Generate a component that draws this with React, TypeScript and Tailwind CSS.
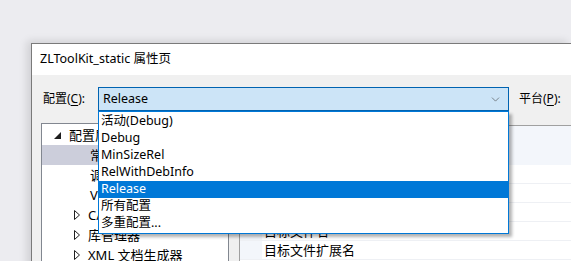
import { ChevronDown } from "lucide-react";

const font = "font-['Noto_Sans','Noto_Sans_CJK_SC',sans-serif]";

const configs = ["活动(Debug)", "Debug", "MinSizeRel", "RelWithDebInfo", "Release", "所有配置", "多重配置..."];

// tree rows: open = expanded node, leaf = child page, closed = collapsed node
const tree = [
    { label: "配置属性", kind: "open" },
    { label: "常规", kind: "leaf", selected: true },
    { label: "调试", kind: "leaf" },
    { label: "VC++ 目录", kind: "leaf" },
    { label: "C/C++", kind: "closed" },
    { label: "库管理器", kind: "closed" },
    { label: "XML 文档生成器", kind: "closed" },
];

const props = ["", "", "", "目标文件名", "目标文件扩展名"];

function Underlined({ text }: { text: string }) {
    // renders "配置(C):" with the access key underlined
    const m = text.match(/^(.*\()(.)(\).*)$/);
    if (!m) return <span>{text}</span>;
    return (
        <span>
            {m[1]}
            <span className="underline underline-offset-2">{m[2]}</span>
            {m[3]}
        </span>
    );
}

export default function App() {
    return (
        <div className={`relative h-[261px] w-[571px] overflow-hidden bg-[#ececf0] text-[12px] leading-none text-black ${font}`}>
            <div className="pl-[31px] pt-[43px]">
                <div className="h-[260px] border-l border-t border-[#7a7a7a] bg-[#f0f0f0] shadow-[-4px_-2px_8px_rgba(0,0,0,0.12)]">
                    {/* title bar */}
                    <div className="flex h-[31px] items-center bg-white pl-[8px] text-[12.5px]">ZLToolKit_static 属性页</div>

                    {/* configuration row */}
                    <div className="flex h-[48px] items-center">
                        <div className="w-[66px] pl-[11px]">
                            <Underlined text="配置(C):" />
                        </div>
                        <div className="flex h-[24px] w-[411px] items-center justify-between border border-[#0063b1] bg-[#cce4f7] pl-[4px] pr-[6px] text-[12.5px]">
                            <span>Release</span>
                            <ChevronDown size={13} strokeWidth={1.1} className="text-[#404040]" />
                        </div>
                        <div className="pl-[10px]">
                            <Underlined text="平台(P):" />
                        </div>
                    </div>

                    {/* tree + property grid */}
                    <div className="flex pl-[9px]">
                        <div className="h-[200px] w-[188px] border-l border-t border-r border-[#828790] bg-white pt-[1px]">
                            {tree.map((t) => (
                                <div
                                    key={t.label}
                                    className={`flex h-[20px] items-center ${t.selected ? "bg-[#cccedb]" : ""} ${t.kind === "open" ? "pl-[12px]" : t.kind === "closed" ? "pl-[32px]" : "pl-[48px]"}`}
                                >
                                    {t.kind === "open" && (
                                        <svg width="7" height="7" viewBox="0 0 7 7" className="mr-[8px]">
                                            <path d="M7 0 L7 7 L0 7 Z" fill="#1e1e1e" />
                                        </svg>
                                    )}
                                    {t.kind === "closed" && (
                                        <svg width="6" height="10" viewBox="0 0 6 10" className="mr-[8px]">
                                            <path d="M0.5 0.5 L5.5 5 L0.5 9.5 Z" fill="none" stroke="#1e1e1e" strokeWidth="1" />
                                        </svg>
                                    )}
                                    <span className="text-[13px]">{t.label}</span>
                                </div>
                            ))}
                        </div>
                        <div className="ml-[10px] mt-[2px] flex-1 border-l border-t border-[#a0a0a0] bg-white">
                            <div className="h-[39px] bg-[#f3f6fb]" />
                            {props.map((p, i) => (
                                <div key={i} className="flex h-[19px] border-b border-[#eef0f4]">
                                    <div className="w-[22px] bg-[#f3f6fb]" />
                                    <div className="flex items-center pl-[2px] text-[13px]">{p}</div>
                                </div>
                            ))}
                        </div>
                    </div>
                </div>
            </div>

            {/* open drop-down list */}
            <div className="absolute left-[98px] top-[111px] w-[411px] border border-[#0078d7] bg-white py-[1px] text-[12.5px] shadow-[3px_3px_3px_rgba(0,0,0,0.3)]">
                {configs.map((c) => (
                    <div
                        key={c}
                        className={`flex h-[17px] items-center pl-[2px] ${c === "Release" ? "bg-[#0078d7] text-white" : ""}`}
                    >
                        {c}
                    </div>
                ))}
            </div>
        </div>
    );
}
